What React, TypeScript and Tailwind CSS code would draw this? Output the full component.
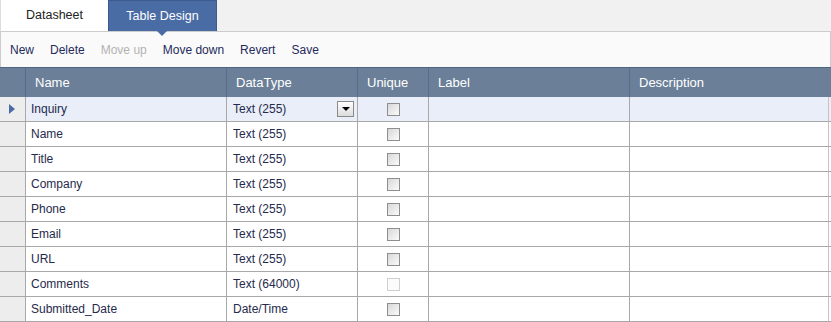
import React from 'react';

const rows = [
  { name: 'Inquiry', type: 'Text (255)', selected: true },
  { name: 'Name', type: 'Text (255)' },
  { name: 'Title', type: 'Text (255)' },
  { name: 'Company', type: 'Text (255)' },
  { name: 'Phone', type: 'Text (255)' },
  { name: 'Email', type: 'Text (255)' },
  { name: 'URL', type: 'Text (255)' },
  { name: 'Comments', type: 'Text (64000)', disabled: true },
  { name: 'Submitted_Date', type: 'Date/Time' },
];

const cols = 'grid grid-cols-[26px_201px_131px_71px_201px_199px]';

function Checkbox({ disabled }: { disabled?: boolean }) {
  return (
    <span
      className={
        disabled
          ? 'block w-[13px] h-[13px] border border-[#cfcfcf] bg-[#fbfbfb]'
          : 'block w-[13px] h-[13px] border border-[#8e8e8e] bg-gradient-to-br from-[#d8d8d8] to-[#fbfbfb]'
      }
    />
  );
}

export default function App() {
  return (
    <div
      className="w-[831px] h-[322px] bg-white text-[12px] overflow-hidden"
      style={{ fontFamily: '"Liberation Sans", Arial, sans-serif' }}
    >
      {/* tabs */}
      <div className="relative flex h-[32px] bg-[#f1f1f1] border-b border-[#cccccc] text-[12.5px]">
        <div className="w-[108px] h-[31px] bg-white border-l border-[#dddddd] flex items-center justify-center text-[#222]">
          Datasheet
        </div>
        <div className="w-[109px] h-[31px] bg-[#4a6ca4] border border-b-0 border-[#3c5a8e] flex items-center justify-center text-white">
          Table Design
        </div>
        <span className="absolute left-[157px] top-[31px] w-0 h-0 border-l-[5px] border-r-[5px] border-t-[5px] border-l-transparent border-r-transparent border-t-[#4a6ca4]" />
      </div>

      {/* toolbar */}
      <div className="flex items-center h-[35px] bg-[#fafafa] border-x border-[#cccccc] pl-[9px] gap-[16px] text-[#252a5c]">
        <span>New</span>
        <span>Delete</span>
        <span className="text-[#b3b3b3]">Move up</span>
        <span>Move down</span>
        <span>Revert</span>
        <span>Save</span>
      </div>

      {/* header */}
      <div className={`${cols} h-[30px] bg-[#6b7f98] border-t border-[#4f6581] text-white text-[13px]`}>
        <div className="border-r border-[#566c88]" />
        <div className="border-r border-[#566c88] flex items-center pl-[9px]">Name</div>
        <div className="border-r border-[#566c88] flex items-center pl-[9px]">DataType</div>
        <div className="border-r border-[#566c88] flex items-center pl-[9px]">Unique</div>
        <div className="border-r border-[#566c88] flex items-center pl-[9px]">Label</div>
        <div className="flex items-center pl-[9px]">Description</div>
      </div>

      {/* rows */}
      {rows.map((r) => (
        <div
          key={r.name}
          className={`${cols} h-[25px] border-b border-[#a8a8a8] text-[#262a4c] ${r.selected ? 'bg-[#e9eef9]' : 'bg-white'}`}
        >
          <div className="bg-[#ededed] border-r border-[#a8a8a8] flex items-center pl-[9px]">
            {r.selected && (
              <span className="w-0 h-0 border-t-[5px] border-b-[5px] border-l-[6px] border-t-transparent border-b-transparent border-l-[#4a6ca4]" />
            )}
          </div>
          <div className="border-r border-[#a8a8a8] flex items-center pl-[5px]">{r.name}</div>
          <div className="border-r border-[#a8a8a8] flex items-center pl-[6px] pr-[3px] justify-between">
            <span>{r.type}</span>
            {r.selected && (
              <span className="w-[17px] h-[16px] border border-[#8a8a8a] bg-gradient-to-b from-white to-[#dcdcdc] flex items-center justify-center">
                <span className="w-0 h-0 border-l-[4px] border-r-[4px] border-t-[4px] border-l-transparent border-r-transparent border-t-black" />
              </span>
            )}
          </div>
          <div className="border-r border-[#a8a8a8] flex items-center justify-center">
            <Checkbox disabled={r.disabled} />
          </div>
          <div className="border-r border-[#a8a8a8]" />
          <div className="border-r border-[#c4c4c4]" />
        </div>
      ))}
    </div>
  );
}
